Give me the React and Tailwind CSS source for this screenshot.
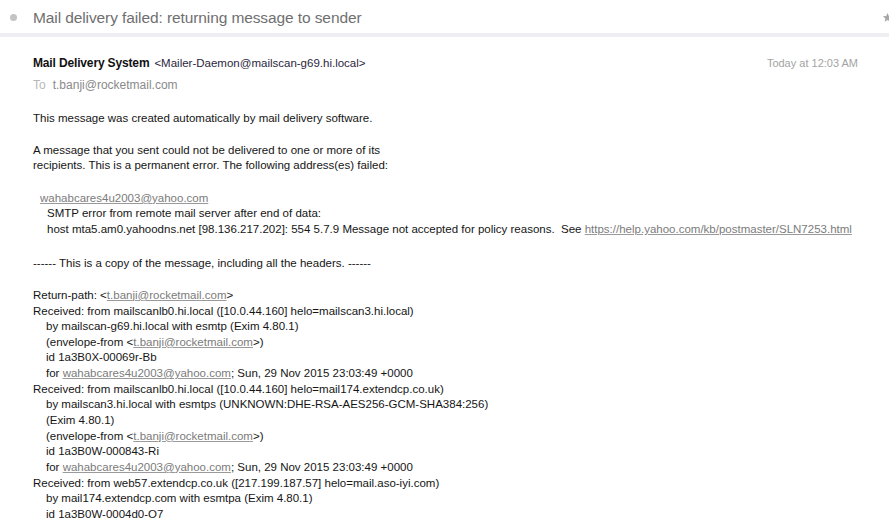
import React from "react";

const L = ({ children }) => (
  <span className="text-[#7b7b7b] underline decoration-[#9a9a9a]">{children}</span>
);

const headers = [
  { t: <>Return-path: &lt;<L>t.banji@rocketmail.com</L>&gt;</> },
  { t: "Received: from mailscanlb0.hi.local ([10.0.44.160] helo=mailscan3.hi.local)" },
  { t: "by mailscan-g69.hi.local with esmtp (Exim 4.80.1)", i: true },
  { t: <>(envelope-from &lt;<L>t.banji@rocketmail.com</L>&gt;)</>, i: true },
  { t: "id 1a3B0X-00069r-Bb", i: true },
  { t: <>for <L>wahabcares4u2003@yahoo.com</L>; Sun, 29 Nov 2015 23:03:49 +0000</>, i: true },
  { t: "Received: from mailscanlb0.hi.local ([10.0.44.160] helo=mail174.extendcp.co.uk)" },
  { t: "by mailscan3.hi.local with esmtps (UNKNOWN:DHE-RSA-AES256-GCM-SHA384:256)", i: true },
  { t: "(Exim 4.80.1)", i: true },
  { t: <>(envelope-from &lt;<L>t.banji@rocketmail.com</L>&gt;)</>, i: true },
  { t: "id 1a3B0W-000843-Ri", i: true },
  { t: <>for <L>wahabcares4u2003@yahoo.com</L>; Sun, 29 Nov 2015 23:03:49 +0000</>, i: true },
  { t: "Received: from web57.extendcp.co.uk ([217.199.187.57] helo=mail.aso-iyi.com)" },
  { t: "by mail174.extendcp.com with esmtpa (Exim 4.80.1)", i: true },
  { t: "id 1a3B0W-0004d0-O7", i: true },
];

export default function App() {
  return (
    <div
      className="w-[889px] h-[527px] overflow-hidden bg-white text-[#151515]"
      style={{ fontFamily: '"Liberation Sans", Arial, sans-serif' }}
    >
      {/* subject bar */}
      <div className="h-[33px] flex items-center relative pt-[2px]">
        <div className="w-[7px] h-[7px] rounded-full bg-[#c4c4c4] ml-[10px]" />
        <h1 className="ml-[16px] text-[15.5px] text-[#6f6f6f] font-light tracking-[-0.1px]">
          Mail delivery failed: returning message to sender
        </h1>
        <svg className="absolute right-[-4px] top-[12px]" width="11" height="11" viewBox="0 0 24 24">
          <path fill="#a8a8a8" d="M12 2l2.9 6.9 7.1.6-5.4 4.7 1.6 7-6.2-3.8-6.2 3.8 1.6-7L2 9.5l7.1-.6z" />
        </svg>
      </div>
      <div className="h-[4px] bg-[#efeff3]" />

      <div className="pl-[33px] pr-[31px] text-[11.5px] leading-[15.64px] whitespace-nowrap">
        {/* sender */}
        <div className="flex items-baseline mt-[19px] text-[12px]">
          <span className="font-bold text-[#111] tracking-[-0.15px]">Mail Delivery System</span>
          <span className="ml-[5px] text-[11.5px] text-[#2b2640]">&lt;Mailer-Daemon@mailscan-g69.hi.local&gt;</span>
          <span className="ml-auto text-[11px] text-[#a3a3a3]">Today at 12:03 AM</span>
        </div>
        <div className="mt-[6px] text-[#8a8a8a] text-[12px]">
          <span className="text-[#b8b8b8]">To</span>
          <span className="ml-[7px]">t.banji@rocketmail.com</span>
        </div>

        {/* body */}
        <div className="mt-[18px]">
          <p>This message was created automatically by mail delivery software.</p>
          <p className="mt-[15.6px]">
            A message that you sent could not be delivered to one or more of its
            <br />
            recipients. This is a permanent error. The following address(es) failed:
          </p>
          <div className="mt-[17px]">
            <div className="pl-[7px]">
              <L>wahabcares4u2003@yahoo.com</L>
            </div>
            <div className="pl-[14px]">
              <div>SMTP error from remote mail server after end of data:</div>
              <div>
                host mta5.am0.yahoodns.net [98.136.217.202]: 554 5.7.9 Message not accepted for policy reasons.&nbsp; See{" "}
                <L>https://help.yahoo.com/kb/postmaster/SLN7253.html</L>
              </div>
            </div>
          </div>
          <p className="mt-[18px]">------ This is a copy of the message, including all the headers. ------</p>
          <div className="mt-[16.5px]">
            {headers.map((h, k) => (
              <div key={k} className={h.i ? "pl-[13px]" : ""}>
                {h.t}
              </div>
            ))}
          </div>
        </div>
      </div>
    </div>
  );
}
